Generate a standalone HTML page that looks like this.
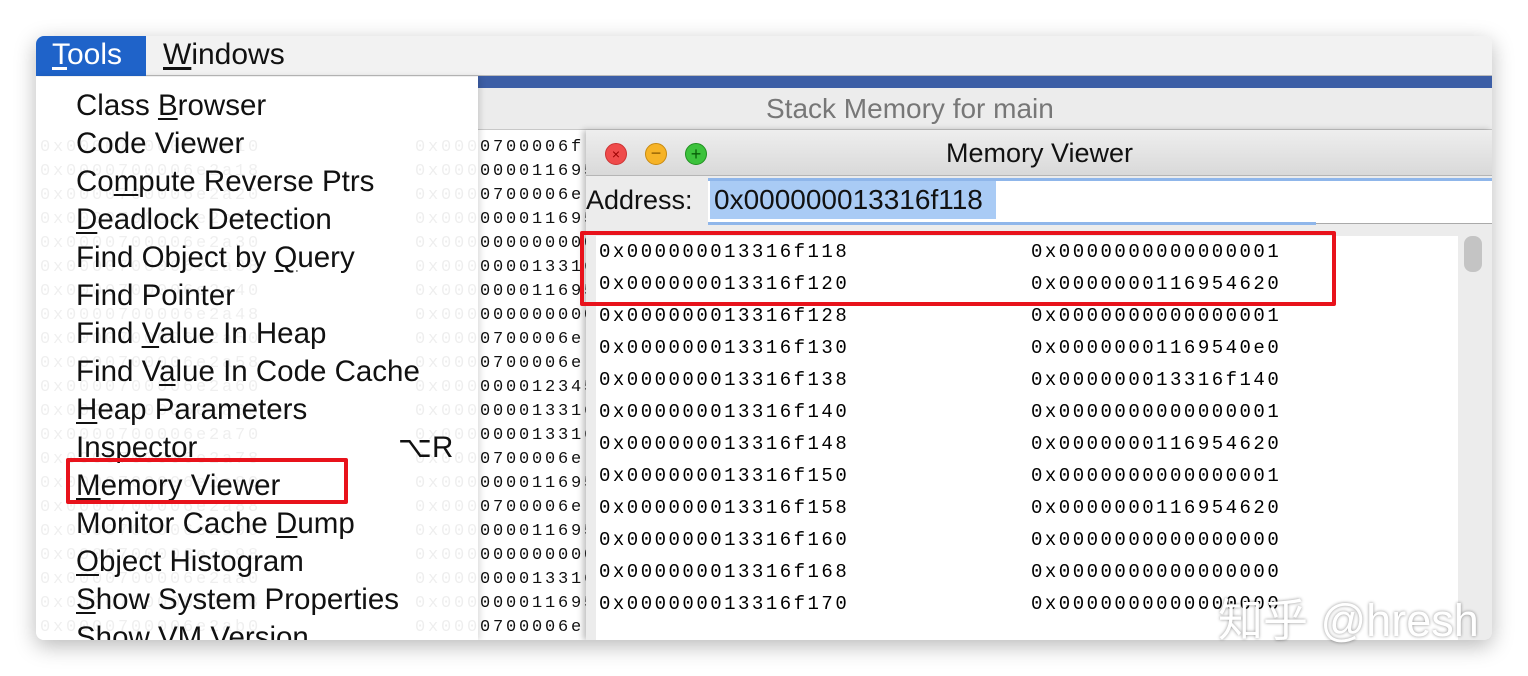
<!DOCTYPE html>
<html><head><meta charset="utf-8"><style>
*{margin:0;padding:0;box-sizing:border-box}
body{width:1528px;height:676px;background:#fff;position:relative;overflow:hidden;font-family:"Liberation Sans","DejaVu Sans",sans-serif}
.win{position:absolute;left:36px;top:36px;width:1456px;height:604px;border-radius:8px;overflow:hidden;background:#fff;box-shadow:0 6px 22px rgba(0,0,0,.28)}
.abs{position:absolute}
.mono{font-family:"Liberation Mono","DejaVu Sans Mono",monospace;font-size:19px;letter-spacing:2.5px;color:#000}
.bgcol{font-size:17px;letter-spacing:2.8px}
.bgcol div{height:24px;line-height:24px}
.menu div{height:38px;line-height:38px;font-size:29.5px;color:#111;padding-left:40px}
u{text-decoration:underline;text-underline-offset:3px}
.rows div{height:32px;line-height:32px;position:relative}
</style></head><body>
<div class="win">
 <div class="abs" style="left:0;top:0;width:1456px;height:40px;background:#f2f2f2;border-bottom:1px solid #bbb"></div>
 <div class="abs" style="left:0;top:0;width:110px;height:40px;background:#1f63c9"></div>
 <div class="abs" style="left:16px;top:2px;font-size:30px;color:#fff"><u>T</u>ools</div>
 <div class="abs" style="left:127px;top:2px;font-size:30px;color:#111"><u>W</u>indows</div>
 <div class="abs" style="left:442px;top:40px;width:1014px;height:12px;background:#3c5ea6"></div>
 <div class="abs" style="left:442px;top:52px;width:1014px;height:42px;background:#ececec;border-bottom:1px solid #c8c8c8"></div>
 <div class="abs" style="left:730px;top:57px;font-size:28px;color:#777">Stack Memory for main</div>
 <div class="abs mono bgcol" style="left:4px;top:100px;color:#222">
  <div>0x0000700006e2a10</div><div>0x0000700006e2a18</div><div>0x0000700006e2a20</div><div>0x0000700006e2a28</div><div>0x0000700006e2a30</div><div>0x0000700006e2a38</div><div>0x0000700006e2a40</div><div>0x0000700006e2a48</div><div>0x0000700006e2a50</div><div>0x0000700006e2a58</div><div>0x0000700006e2a60</div><div>0x0000700006e2a68</div><div>0x0000700006e2a70</div><div>0x0000700006e2a78</div><div>0x0000700006e2a80</div><div>0x0000700006e2a88</div><div>0x0000700006e2a90</div><div>0x0000700006e2a98</div><div>0x0000700006e2aa0</div><div>0x0000700006e2aa8</div><div>0x0000700006e2ab0</div>
 </div>
 <div class="abs mono bgcol" style="left:379px;top:100px;color:#111">
  <div>0x0000700006f</div><div>0x0000000116954</div><div>0x0000700006e</div><div>0x0000000116954</div><div>0x0000000000000</div><div>0x0000000133160</div><div>0x0000000116954</div><div>0x0000000000000</div><div>0x0000700006e</div><div>0x0000700006e</div><div>0x0000000123456</div><div>0x0000000133160</div><div>0x0000000133160</div><div>0x0000700006e</div><div>0x0000000116954</div><div>0x0000700006e</div><div>0x0000000116954</div><div>0x0000000000000</div><div>0x0000000133160</div><div>0x0000000116954</div><div>0x0000700006e</div>
 </div>
 <div class="abs menu" style="left:0;top:41px;width:442px;height:563px;background:rgba(255,255,255,.93);box-shadow:2px 0 6px rgba(0,0,0,.15);padding-top:10px">
  <div>Class <u>B</u>rowser</div><div>Code Viewer</div><div>Co<u>m</u>pute Reverse Ptrs</div><div><u>D</u>eadlock Detection</div><div>Find Object by <u>Q</u>uery</div><div>Find Pointer</div><div>Find <u>V</u>alue In Heap</div><div>Find V<u>a</u>lue In Code Cache</div><div><u>H</u>eap Parameters</div><div style="position:relative">Inspector<span style="position:absolute;left:362px">⌥R</span></div><div><u>M</u>emory Viewer</div><div>Monitor Cache <u>D</u>ump</div><div><u>O</u>bject Histogram</div><div><u>S</u>how System Properties</div><div>Show VM Version</div>
 </div>
 <div class="abs" style="left:30px;top:422px;width:282px;height:46px;border:4px solid #e8121b;border-radius:2px"></div>
 <div class="abs" style="left:550px;top:94px;width:906px;height:510px;background:#ececec;box-shadow:-3px 0 6px rgba(0,0,0,.25)">
  <div class="abs" style="left:0;top:0;width:906px;height:46px;background:linear-gradient(#eeeeee,#d9d9d9);border-bottom:1px solid #b5b5b5"></div>
  <div class="abs" style="left:19px;top:13px;width:22px;height:22px;border-radius:50%;background:#ef4b4b;border:1px solid #c33;color:#900;font-size:14px;text-align:center;line-height:20px">×</div>
  <div class="abs" style="left:59px;top:13px;width:22px;height:22px;border-radius:50%;background:#f6b327;border:1px solid #c88a10;color:#8a5a00;font-size:18px;text-align:center;line-height:19px">−</div>
  <div class="abs" style="left:99px;top:13px;width:22px;height:22px;border-radius:50%;background:#3cc23c;border:1px solid #209020;color:#075e07;font-size:18px;text-align:center;line-height:20px">+</div>
  <div class="abs" style="left:360px;top:8px;font-size:27px;color:#111">Memory Viewer</div>
  <div class="abs" style="left:0;top:55px;font-size:27px;color:#111">Address:</div>
  <div class="abs" style="left:122px;top:48px;width:784px;height:46px;background:#fff;border-top:3px solid #8fb6ea;border-bottom:1px solid #aaa"></div>
  <div class="abs" style="left:122px;top:92px;width:608px;height:3px;background:#8fb6ea"></div>
  <div class="abs" style="left:124px;top:51px;height:38px;width:286px;background:#a9cbf5"></div>
  <div class="abs" style="left:128px;top:54px;font-size:28px;color:#111">0x000000013316f118</div>
  <div class="abs" style="left:10px;top:106px;width:862px;height:404px;background:#fff"></div>
  <div class="abs" style="left:878px;top:106px;width:18px;height:36px;border-radius:8px;background:#c4c4c4"></div>
  <div class="abs mono rows" style="left:13px;top:106px;width:860px">
   <div>0x000000013316f118<span class="abs" style="left:432px">0x0000000000000001</span></div>
   <div>0x000000013316f120<span class="abs" style="left:432px">0x0000000116954620</span></div>
   <div>0x000000013316f128<span class="abs" style="left:432px">0x0000000000000001</span></div>
   <div>0x000000013316f130<span class="abs" style="left:432px">0x00000001169540e0</span></div>
   <div>0x000000013316f138<span class="abs" style="left:432px">0x000000013316f140</span></div>
   <div>0x000000013316f140<span class="abs" style="left:432px">0x0000000000000001</span></div>
   <div>0x000000013316f148<span class="abs" style="left:432px">0x0000000116954620</span></div>
   <div>0x000000013316f150<span class="abs" style="left:432px">0x0000000000000001</span></div>
   <div>0x000000013316f158<span class="abs" style="left:432px">0x0000000116954620</span></div>
   <div>0x000000013316f160<span class="abs" style="left:432px">0x0000000000000000</span></div>
   <div>0x000000013316f168<span class="abs" style="left:432px">0x0000000000000000</span></div>
   <div>0x000000013316f170<span class="abs" style="left:432px">0x0000000000000000</span></div>
  </div>
  <div class="abs" style="left:-6px;top:101px;width:756px;height:75px;border:4px solid #e8121b;border-radius:2px"></div>
 </div>
</div>
<div class="abs" style="left:1218px;top:584px;font-size:45px;color:#fff;text-shadow:0 0 3px rgba(0,0,0,.45);font-family:'Liberation Sans','Noto Sans CJK SC',sans-serif">知乎 @hresh</div>
</body></html>
